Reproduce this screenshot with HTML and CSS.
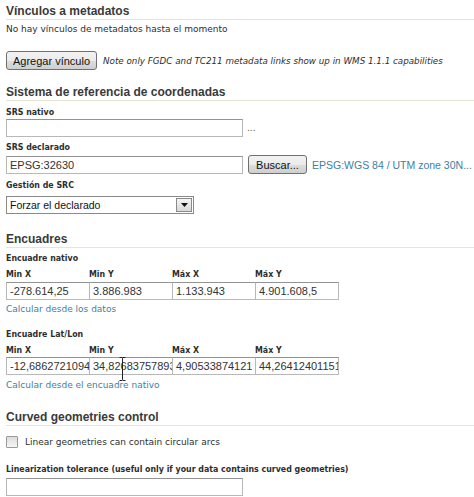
FILE: index.html
```html
<!DOCTYPE html>
<html lang="es">
<head>
<meta charset="utf-8">
<title>Capa</title>
<link rel="stylesheet" href="styles.css">
</head>
<body>
<div class="page">
  <h3 class="heading h-first">Vínculos a metadatos</h3>
  <p class="note-empty">No hay vínculos de metadatos hasta el momento</p>
  <div class="btn-row">
    <span class="btn btn-add">Agregar vínculo</span>
    <span class="hint">Note only FGDC and TC211 metadata links show up in WMS 1.1.1 capabilities</span>
  </div>

  <h3 class="heading h-srs">Sistema de referencia de coordenadas</h3>
  <div class="label l-native">SRS nativo</div>
  <div class="field-row r-native">
    <span class="input wide"></span>
    <span class="dots">...</span>
  </div>
  <div class="label l-decl">SRS declarado</div>
  <div class="field-row r-decl">
    <span class="input wide">EPSG:32630</span>
    <span class="btn btn-find">Buscar...</span>
    <span class="link srs-link">EPSG:WGS 84 / UTM zone 30N...</span>
  </div>
  <div class="label l-policy">Gestión de SRC</div>
  <div class="select">
    <span class="select-text">Forzar el declarado</span>
    <span class="select-arrow"><svg width="7" height="4" viewBox="0 0 7 4"><path d="M0 0h7L3.5 4z" fill="#111"/></svg></span>
  </div>

  <h3 class="heading h-bbox">Encuadres</h3>
  <div class="label l-nbox">Encuadre nativo</div>
  <div class="bbox">
    <span class="col-label">Min X</span>
    <span class="col-label">Min Y</span>
    <span class="col-label">Máx X</span>
    <span class="col-label">Máx Y</span>
    <span class="input cell">-278.614,25</span>
    <span class="input cell">3.886.983</span>
    <span class="input cell">1.133.943</span>
    <span class="input cell">4.901.608,5</span>
  </div>
  <div class="link l-calc1">Calcular desde los datos</div>

  <div class="label l-llbox">Encuadre Lat/Lon</div>
  <div class="bbox ll">
    <span class="col-label">Min X</span>
    <span class="col-label">Min Y</span>
    <span class="col-label">Máx X</span>
    <span class="col-label">Máx Y</span>
    <span class="input cell">-12,68627210945</span>
    <span class="input cell">34,82683757893</span>
    <span class="input cell">4,90533874121</span>
    <span class="input cell">44,26412401151</span>
    <svg class="ibeam" width="7" height="24" viewBox="0 0 7 24"><path d="M0.5 0.5h2.5l0.5 1 0.5-1h2.5M3.5 1.5v21M0.5 23.5h2.5l0.5-1 0.5 1h2.5" fill="none" stroke="#222" stroke-width="1"/></svg>
  </div>
  <div class="link l-calc2">Calcular desde el encuadre nativo</div>

  <h3 class="heading h-curve">Curved geometries control</h3>
  <label class="check-row">
    <span class="checkbox"></span>
    <span class="check-text">Linear geometries can contain circular arcs</span>
  </label>
  <div class="label l-tol">Linearization tolerance (useful only if your data contains curved geometries)</div>
  <span class="input wide tol"></span>
</div>
</body>
</html>
```

FILE: styles.css
```css
html, body {
  margin: 0;
  padding: 0;
  background: #ffffff;
}
.page {
  padding: 0 6px;
  color: #2e2e2e;
  font-family: "DejaVu Sans", Verdana, sans-serif;
  font-size: 9px;
}
.heading {
  margin: 0;
  font-family: "Liberation Sans", Arial, sans-serif;
  font-size: 12px;
  font-weight: bold;
  line-height: 16px;
  color: #3a3a3a;
  border-bottom: 1px solid #e6e6d4;
  margin-right: -6px;
}
.h-first { margin-top: 3px; }
.h-srs { margin-top: 14px; }
.h-bbox { margin-top: 17px; }
.h-curve { margin-top: 18px; }

.note-empty {
  margin: 3px 0 0;
  line-height: 12px;
}
.btn-row {
  margin-top: 16px;
  display: flex;
  align-items: center;
  gap: 6px;
  height: 19px;
}
.btn {
  display: inline-flex;
  align-items: center;
  justify-content: center;
  flex: none;
  box-sizing: border-box;
  height: 19px;
  border: 1px solid #707070;
  border-radius: 3px;
  background: linear-gradient(#f2f2f2 0%, #ebebeb 50%, #dddddd 51%, #cfcfcf 100%);
  font-family: "Liberation Sans", Arial, sans-serif;
  font-size: 11px;
  color: #111111;
}
.btn-add { width: 91px; }
.btn-find { width: 59px; margin-left: 5px; }
.hint {
  font-style: italic;
  font-size: 8.75px;
  line-height: 12px;
  white-space: nowrap;
}
.label {
  font-weight: bold;
  font-size: 8.75px;
  line-height: 12px;
  font-family: "DejaVu Sans Condensed", "DejaVu Sans", sans-serif;
}
.l-native { margin-top: 5px; }
.l-decl { margin-top: 4px; }
.l-policy { margin-top: 5px; }
.l-nbox { margin-top: 4px; }
.l-llbox { margin-top: 13px; }
.l-tol { margin-top: 15px; }

.field-row {
  display: flex;
  align-items: center;
  white-space: nowrap;
}
.r-native { margin-top: 1px; }
.r-decl { margin-top: 2px; }
.input {
  display: flex;
  align-items: center;
  flex: none;
  box-sizing: border-box;
  height: 18px;
  padding: 0 3px;
  border: 1px solid #b8b8b8;
  border-top-color: #939393;
  background: #ffffff;
  font-family: "Liberation Sans", Arial, sans-serif;
  font-size: 11px;
  color: #333333;
  white-space: nowrap;
  overflow: hidden;
}
.wide { width: 237px; }
.dots {
  margin-left: 4px;
  color: #555555;
  font-size: 9px;
  line-height: 12px;
}
.link {
  color: #3d7f9f;
  line-height: 12px;
}
.srs-link {
  margin-left: 5px;
  font-family: "Liberation Sans", Arial, sans-serif;
  font-size: 10.5px;
  white-space: nowrap;
}
.select {
  margin-top: 5px;
  display: flex;
  align-items: center;
  justify-content: space-between;
  box-sizing: border-box;
  width: 188px;
  height: 18px;
  border: 1px solid #8a8a8a;
  padding: 0 1px 0 3px;
  font-family: "Liberation Sans", Arial, sans-serif;
  font-size: 10.5px;
  color: #111111;
}
.select-arrow {
  display: flex;
  align-items: center;
  justify-content: center;
  box-sizing: border-box;
  width: 16px;
  height: 14px;
  border: 1px solid #8a8a8a;
  background: linear-gradient(#f4f4f4, #d8d8d8);
}
.bbox {
  position: relative;
  margin-top: 4px;
  display: grid;
  grid-template-columns: repeat(4, 83px);
  row-gap: 2px;
}
.bbox.ll { row-gap: 1px; }
.col-label {
  font-weight: bold;
  font-size: 8.75px;
  line-height: 12px;
  font-family: "DejaVu Sans Condensed", "DejaVu Sans", sans-serif;
}
.cell {
  width: 84px;
  text-overflow: clip;
}
.l-calc1 { margin-top: 3px; }
.l-calc2 { margin-top: 4px; }
.ibeam {
  position: absolute;
  left: 113px;
  top: 13px;
}
.check-row {
  margin-top: 10px;
  display: flex;
  align-items: center;
  gap: 7px;
  line-height: 12px;
}
.checkbox {
  display: inline-block;
  box-sizing: border-box;
  width: 12px;
  height: 12px;
  border: 1px solid #9a9a9a;
  border-radius: 1px;
  background: linear-gradient(#dcdcdc, #f6f6f6);
}
.tol {
  margin-top: 3px;
}
```
